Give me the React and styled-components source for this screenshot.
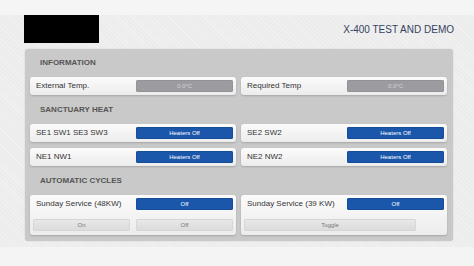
import React from "react";
import styled, { createGlobalStyle } from "styled-components";

const Global = createGlobalStyle`
  html, body { margin: 0; padding: 0; }
  body {
    width: 474px;
    height: 266px;
    overflow: hidden;
    background: #f4f4f4;
    font-family: "Liberation Sans", Arial, sans-serif;
  }
`;

const Page = styled.div`
  display: flex;
  flex-direction: column;
  height: 266px;
`;

const TopBand = styled.div`
  height: 15px;
  background: #f5f5f5;
`;

const Main = styled.div`
  background: #ececec;
  background-image: repeating-linear-gradient(45deg, rgba(255,255,255,0.25) 0 1px, transparent 1px 3px);
  padding: 0 20px 6px 24px;
`;

const Header = styled.div`
  display: flex;
  justify-content: space-between;
  align-items: flex-start;
  height: 34px;
`;

const Logo = styled.div`
  width: 75px;
  height: 28px;
  background: #000;
`;

const Title = styled.div`
  font-size: 10px;
  line-height: 12px;
  margin-top: 9px;
  color: #36435f;
`;

const Panel = styled.div`
  width: 428px;
  margin-left: 1px;
  box-sizing: border-box;
  padding: 0 6px 6px 5px;
  background: #c9c9c9;
  border-radius: 3px;
  box-shadow: 0 0 2px rgba(0,0,0,0.12);
  display: flex;
  flex-direction: column;
  gap: 1px;
`;

const Section = styled.div`
  display: flex;
  flex-direction: column;
`;

const Heading = styled.div`
  height: 28px;
  line-height: 28px;
  padding-left: 10px;
  font-size: 8px;
  font-weight: bold;
  color: #555555;
`;

const Grid = styled.div`
  display: grid;
  grid-template-columns: 206px 206px;
  column-gap: 5px;
  row-gap: 6px;
  align-items: start;
`;

const Card = styled.div`
  display: grid;
  grid-template-columns: 97px 97px;
  column-gap: 6px;
  row-gap: 9px;
  padding: 3px 3px ${p => (p.$tall ? "4px" : "3px")};
  background: linear-gradient(#fbfbfb, #ececec);
  border-radius: 3px;
  box-shadow: 0 1px 2px rgba(0,0,0,0.18);
`;

const Label = styled.div`
  font-size: 8px;
  line-height: 12px;
  padding-left: 3px;
  color: #333333;
  white-space: nowrap;
`;

const Value = styled.div`
  height: 12px;
  line-height: 12px;
  text-align: center;
  font-size: 6px;
  border-radius: 2px;
  background: ${p => (p.$blue ? "#1a56aa" : "#9b9ba0")};
  color: ${p => (p.$blue ? "#ffffff" : "#d4d4d8")};
  box-shadow: inset 0 0 0 1px ${p => (p.$blue ? "#174c96" : "#929297")};
`;

const Button = styled.div`
  height: 12px;
  line-height: 12px;
  text-align: center;
  font-size: 6px;
  color: #777;
  border-radius: 2px;
  background: linear-gradient(#e9e9e9, #dadada);
  box-shadow: inset 0 0 0 1px #d6d6d6;
  width: ${p => p.$w || "auto"};
  grid-column: ${p => (p.$span ? "1 / 3" : "auto")};
`;

const Row = ({ label, value, blue }) => (
  <Card>
    <Label>{label}</Label>
    <Value $blue={blue}>{value}</Value>
  </Card>
);

export default function App() {
  return (
    <>
      <Global />
      <Page>
        <TopBand />
        <Main>
          <Header>
            <Logo />
            <Title>X-400 TEST AND DEMO</Title>
          </Header>
          <Panel>
            <Section>
              <Heading>INFORMATION</Heading>
              <Grid>
                <Row label="External Temp." value="0.0°C" />
                <Row label="Required Temp" value="0.0°C" />
              </Grid>
            </Section>
            <Section>
              <Heading>SANCTUARY HEAT</Heading>
              <Grid>
                <Row label="SE1 SW1 SE3 SW3" value="Heaters Off" blue />
                <Row label="SE2 SW2" value="Heaters Off" blue />
                <Row label="NE1 NW1" value="Heaters Off" blue />
                <Row label="NE2 NW2" value="Heaters Off" blue />
              </Grid>
            </Section>
            <Section>
              <Heading>AUTOMATIC CYCLES</Heading>
              <Grid>
                <Card $tall>
                  <Label>Sunday Service (48KW)</Label>
                  <Value $blue>Off</Value>
                  <Button>On</Button>
                  <Button>Off</Button>
                </Card>
                <Card $tall>
                  <Label>Sunday Service (39 KW)</Label>
                  <Value $blue>Off</Value>
                  <Button $w="172px" $span>Toggle</Button>
                </Card>
              </Grid>
            </Section>
          </Panel>
        </Main>
      </Page>
    </>
  );
}
